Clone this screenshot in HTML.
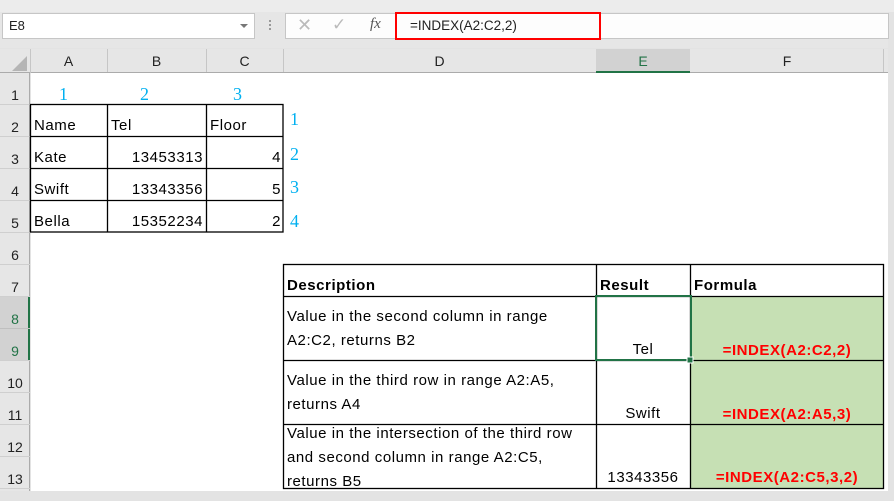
<!DOCTYPE html>
<html><head><meta charset="utf-8"><style>
*{margin:0;padding:0;box-sizing:border-box}
body{width:894px;height:499px;overflow:hidden;background:#e3e3e3;font-family:"Liberation Sans",sans-serif;position:relative}
.a{position:absolute}
.t{font-size:15px;letter-spacing:0.55px;color:#000;white-space:nowrap}
.b{font-family:"Liberation Serif",serif;color:#00b0f0;font-size:18px}
.hdr{font-size:14px;color:#222;text-align:center}
</style></head><body>
<div class="a" style="left:0;top:0;width:894px;height:12px;background:#ececec"></div>
<div class="a" style="left:0;top:12px;width:888px;height:36px;background:#e6e6e6"></div>
<div class="a" style="left:2px;top:13px;width:253px;height:26px;background:#fff;border:1px solid #c6c6c6"></div>
<div class="a" style="left:9px;top:18px;font-size:13px;color:#222">E8</div>
<div class="a" style="left:240px;top:24px;width:0;height:0;border-left:4px solid transparent;border-right:4px solid transparent;border-top:4px solid #777"></div>
<div class="a" style="left:269px;top:20px;width:2px;height:2px;background:#999;box-shadow:0 4px #999,0 8px #999"></div>
<div class="a" style="left:285px;top:13px;width:604px;height:26px;background:#fdfdfd;border:1px solid #c6c6c6"></div>
<div class="a" style="left:297px;top:15px;font-size:18px;color:#bbb">✕</div>
<div class="a" style="left:332px;top:15px;font-size:17px;color:#bbb">✓</div>
<div class="a" style="left:370px;top:16px;font-family:'Liberation Serif',serif;font-style:italic;font-size:15px;color:#555">fx</div>
<div class="a" style="left:395px;top:12px;width:206px;height:28px;border:2px solid #f00"></div>
<div class="a" style="left:410px;top:18px;font-size:13.5px;color:#222">=INDEX(A2:C2,2)</div>
<div class="a" style="left:0;top:49px;width:888px;height:24px;background:#e6e6e6;border-bottom:1px solid #ababab"></div>
<div class="a" style="left:596px;top:49px;width:94px;height:24px;background:#d2d2d2;border-bottom:2px solid #217346"></div>
<div class="a" style="left:12px;top:56px;width:0;height:0;border-left:15px solid transparent;border-bottom:15px solid #b5b5b5"></div>
<div class="a" style="left:30px;top:49px;width:1px;height:24px;background:#c6c6c6"></div>
<div class="a" style="left:107px;top:49px;width:1px;height:23px;background:#c6c6c6"></div>
<div class="a" style="left:206px;top:49px;width:1px;height:23px;background:#c6c6c6"></div>
<div class="a" style="left:283px;top:49px;width:1px;height:23px;background:#c6c6c6"></div>
<div class="a" style="left:883px;top:49px;width:1px;height:23px;background:#c6c6c6"></div>
<div class="a hdr" style="left:30px;top:53px;width:77px">A</div>
<div class="a hdr" style="left:107px;top:53px;width:99px">B</div>
<div class="a hdr" style="left:206px;top:53px;width:77px">C</div>
<div class="a hdr" style="left:283px;top:53px;width:313px">D</div>
<div class="a hdr" style="left:596px;top:53px;width:94px;color:#217346">E</div>
<div class="a hdr" style="left:690px;top:53px;width:194px">F</div>
<div class="a" style="left:31px;top:73px;width:857px;height:418px;background:#fff"></div>
<div class="a" style="left:0;top:73px;width:30px;height:418px;background:#e6e6e6;border-right:1px solid #ababab"></div>
<div class="a" style="left:0;top:297px;width:30px;height:64px;background:#d2d2d2;border-right:2px solid #217346"></div>
<div class="a" style="left:0;top:73px;width:30px">
<div style="height:32px;line-height:44px;font-size:14px;color:#222;text-align:center;border-bottom:1px solid #cfcfcf">1</div>
<div style="height:32px;line-height:44px;font-size:14px;color:#222;text-align:center;border-bottom:1px solid #cfcfcf">2</div>
<div style="height:32px;line-height:44px;font-size:14px;color:#222;text-align:center;border-bottom:1px solid #cfcfcf">3</div>
<div style="height:32px;line-height:44px;font-size:14px;color:#222;text-align:center;border-bottom:1px solid #cfcfcf">4</div>
<div style="height:32px;line-height:44px;font-size:14px;color:#222;text-align:center;border-bottom:1px solid #cfcfcf">5</div>
<div style="height:32px;line-height:44px;font-size:14px;color:#222;text-align:center;border-bottom:1px solid #cfcfcf">6</div>
<div style="height:32px;line-height:44px;font-size:14px;color:#222;text-align:center;border-bottom:1px solid #cfcfcf">7</div>
<div style="height:32px;line-height:44px;font-size:14px;color:#217346;text-align:center;border-bottom:1px solid #bfbfbf">8</div>
<div style="height:32px;line-height:44px;font-size:14px;color:#217346;text-align:center;border-bottom:1px solid #cfcfcf">9</div>
<div style="height:32px;line-height:44px;font-size:14px;color:#222;text-align:center;border-bottom:1px solid #cfcfcf">10</div>
<div style="height:32px;line-height:44px;font-size:14px;color:#222;text-align:center;border-bottom:1px solid #cfcfcf">11</div>
<div style="height:32px;line-height:44px;font-size:14px;color:#222;text-align:center;border-bottom:1px solid #cfcfcf">12</div>
<div style="height:32px;line-height:44px;font-size:14px;color:#222;text-align:center;border-bottom:1px solid #cfcfcf">13</div>
</div>
<div class="a b" style="left:59px;top:84px">1</div>
<div class="a b" style="left:140px;top:84px">2</div>
<div class="a b" style="left:233px;top:84px">3</div>
<div class="a b" style="left:290px;top:109px">1</div>
<div class="a b" style="left:290px;top:144px">2</div>
<div class="a b" style="left:290px;top:177px">3</div>
<div class="a b" style="left:290px;top:211px">4</div>
<svg class="a" style="left:0;top:0" width="894" height="499">
<g stroke="#000" stroke-width="1.3" fill="none">
<rect x="30.5" y="104.5" width="252.5" height="127.5"/>
<path d="M30 136.5H283M30 168.5H283M30 200.5H283M107.5 104V232M206.5 104V232"/>
</g>
<rect x="690" y="297" width="194" height="192" fill="#c6e0b4"/>
<g stroke="#000" stroke-width="1.3" fill="none">
<rect x="283.5" y="264.5" width="600" height="224"/>
<path d="M283 296.5H884M283 360.5H884M283 424.5H884M596.5 264V489M690.5 264V489"/>
</g>
<rect x="596" y="296" width="95" height="64" fill="none" stroke="#217346" stroke-width="2"/>
<rect x="687" y="357" width="6" height="6" fill="#217346" stroke="#fff" stroke-width="1"/>
</svg>
<div class="a t" style="left:34px;top:117px">Name</div>
<div class="a t" style="left:111px;top:117px">Tel</div>
<div class="a t" style="left:210px;top:117px">Floor</div>
<div class="a t" style="left:34px;top:149px">Kate</div>
<div class="a t" style="left:34px;top:181px">Swift</div>
<div class="a t" style="left:34px;top:213px">Bella</div>
<div class="a t" style="left:107px;top:149px;width:96px;text-align:right">13453313</div>
<div class="a t" style="left:107px;top:181px;width:96px;text-align:right">13343356</div>
<div class="a t" style="left:107px;top:213px;width:96px;text-align:right">15352234</div>
<div class="a t" style="left:206px;top:149px;width:75px;text-align:right">4</div>
<div class="a t" style="left:206px;top:181px;width:75px;text-align:right">5</div>
<div class="a t" style="left:206px;top:213px;width:75px;text-align:right">2</div>
<div class="a t" style="left:287px;top:277px;font-weight:bold">Description</div>
<div class="a t" style="left:600px;top:277px;font-weight:bold">Result</div>
<div class="a t" style="left:694px;top:277px;font-weight:bold">Formula</div>
<div class="a t" style="left:287px;top:308px">Value in the second column in range</div>
<div class="a t" style="left:287px;top:332px">A2:C2, returns B2</div>
<div class="a t" style="left:287px;top:372px">Value in the third row in range A2:A5,</div>
<div class="a t" style="left:287px;top:396px">returns A4</div>
<div class="a t" style="left:287px;top:425px">Value in the intersection of the third row</div>
<div class="a t" style="left:287px;top:449px">and second column in range A2:C5,</div>
<div class="a t" style="left:287px;top:473px">returns B5</div>
<div class="a t" style="left:596px;top:341px;width:94px;text-align:center">Tel</div>
<div class="a t" style="left:596px;top:405px;width:94px;text-align:center">Swift</div>
<div class="a t" style="left:596px;top:469px;width:94px;text-align:center">13343356</div>
<div class="a t" style="left:690px;top:342px;width:194px;text-align:center;color:#f00;font-weight:bold">=INDEX(A2:C2,2)</div>
<div class="a t" style="left:690px;top:406px;width:194px;text-align:center;color:#f00;font-weight:bold">=INDEX(A2:A5,3)</div>
<div class="a t" style="left:690px;top:469px;width:194px;text-align:center;color:#f00;font-weight:bold">=INDEX(A2:C5,3,2)</div>
</body></html>
